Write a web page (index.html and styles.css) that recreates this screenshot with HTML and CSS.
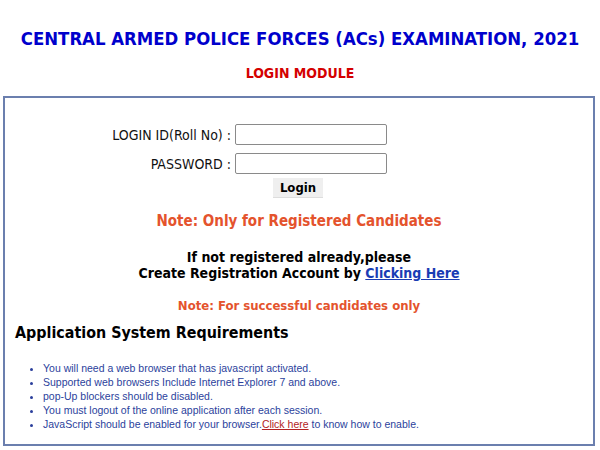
FILE: index.html
```html
<!DOCTYPE html>
<html lang="en">
<head>
    <meta charset="UTF-8">
    <title>Login Module</title>
    <link rel="stylesheet" href="styles.css">
</head>
<body>
    <h1 class="title">CENTRAL ARMED POLICE FORCES (ACs) EXAMINATION, 2021</h1>
    <h2 class="module">LOGIN MODULE</h2>

    <div class="box">
        <form class="login">
            <label for="uid">LOGIN ID(Roll No) :</label>
            <input type="text" id="uid">
            <label for="pwd">PASSWORD :</label>
            <input type="password" id="pwd">
            <div class="submit"><button type="button">Login</button></div>
        </form>

        <p class="note">Note: Only for Registered Candidates</p>

        <p class="register">If not registered already,please<br>
            Create Registration Account by <a href="#">Clicking Here</a></p>

        <p class="note small">Note: For successful candidates only</p>

        <h3 class="req-title">Application System Requirements</h3>
        <ul class="req">
            <li>You will need a web browser that has javascript activated.</li>
            <li>Supported web browsers Include Internet Explorer 7 and above.</li>
            <li>pop-Up blockers should be disabled.</li>
            <li>You must logout of the online application after each session.</li>
            <li>JavaScript should be enabled for your browser.<a href="#">Click here</a> to know how to enable.</li>
        </ul>
    </div>
</body>
</html>
```

FILE: styles.css
```css
* {
    margin: 0;
    padding: 0;
    box-sizing: border-box;
}

body {
    font-family: "DejaVu Sans Condensed", "DejaVu Sans", sans-serif;
    font-stretch: condensed;
    background: #fff;
    color: #000;
}

.title {
    margin-top: 28px;
    text-align: center;
    font-size: 18.4px;
    line-height: 21px;
    color: #0000cc;
}

.module {
    margin-top: 16px;
    text-align: center;
    font-size: 14px;
    line-height: 17px;
    color: #d40000;
}

.box {
    margin: 14px 5px 0 3px;
    height: 350px;
    border: 2px solid #6b7fae;
}

.login {
    display: grid;
    grid-template-columns: 226px 152px;
    column-gap: 4px;
    row-gap: 8px;
    align-items: center;
    padding-top: 26px;
}

.login label {
    text-align: right;
    font-size: 14px;
    color: #111;
}

.login input {
    height: 21px;
    border: 1px solid #8a8a8a;
    border-radius: 2px;
}

.submit {
    grid-column: 1 / 3;
    text-align: center;
    padding-left: 204px;
    margin-top: -5px;
}

.submit button {
    font-family: inherit;
    font-stretch: condensed;
    font-weight: bold;
    font-size: 13px;
    padding: 2px 7px;
    background: #efefef;
    border: none;
    border-bottom: 1px solid #ddd;
}

.note {
    margin-top: 14px;
    text-align: center;
    font-size: 15px;
    line-height: 19px;
    font-weight: bold;
    color: #e4532d;
}

.note.small {
    margin-top: 17px;
    font-size: 13px;
    line-height: 16px;
}

.register {
    margin-top: 18px;
    text-align: center;
    font-size: 14px;
    font-weight: bold;
    line-height: 16px;
}

.register a {
    color: #1a3cb4;
}

.req-title {
    margin: 8px 0 0 10px;
    font-size: 15.9px;
    line-height: 21px;
}

.req {
    margin: 18px 0 0 38px;
    font-family: "Liberation Sans", Arial, sans-serif;
    font-stretch: normal;
    font-size: 10.5px;
    line-height: 14px;
    color: #2b3f9c;
}

.req a {
    color: #b22222;
}
```
